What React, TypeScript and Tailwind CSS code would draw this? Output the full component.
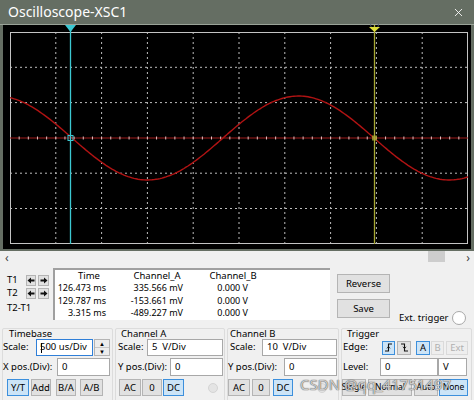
import { X } from 'lucide-react'
import clsx from 'clsx'

interface BtnProps {
  label?: React.ReactNode
  w: string
  h?: string
  active?: boolean
  disabled?: boolean
  className?: string
}

function Btn({ label, w, h = 'h-full', active, disabled, className }: BtnProps) {
  return (
    <div
      className={clsx(
        'flex items-center justify-center border shrink-0 leading-none whitespace-nowrap',
        w,
        h,
        active && 'bg-[#cce4f7] border-[#3c8fdc]',
        disabled && 'bg-[#eeeeee] border-[#dadada] text-[#b0b0b0]',
        !active && !disabled && 'bg-[#e1e1e1] border-[#b4b4b4]',
        className,
      )}
    >
      {label}
    </div>
  )
}

function Field({ value, w, focus }: { value: string; w: string; focus?: boolean }) {
  return (
    <div
      className={clsx(
        'flex items-center h-full bg-white border pl-[4px] shrink-0 whitespace-pre',
        w,
        focus ? 'border-[#2f7fd8]' : 'border-[#a8a8a8]',
      )}
    >
      {focus && <span className="w-px h-[10px] bg-black -mr-[2px]" />}
      {value}
    </div>
  )
}

function Arrow({ dir }: { dir: 'l' | 'r' }) {
  return (
    <svg width="8" height="7" viewBox="0 0 8 7">
      {dir === 'l' ? (
        <path d="M0.5 3.5 L4 0.5 V2.5 H7.5 V4.5 H4 V6.5 Z" fill="#111" />
      ) : (
        <path d="M7.5 3.5 L4 0.5 V2.5 H0.5 V4.5 H4 V6.5 Z" fill="#111" />
      )}
    </svg>
  )
}

function Scope() {
  const pts: string[] = []
  for (let x = 10; x <= 468; x += 2) {
    const y = 138 + 42 * Math.sin((2 * Math.PI * (x - 72)) / 302)
    pts.push(`${x},${y.toFixed(1)}`)
  }
  const vx = Array.from({ length: 9 }, (_, i) => 10 + 45.8 * (i + 1))
  const hy = [67.3, 102.6, 173.2, 208.5]
  const ticks = Array.from({ length: 49 }, (_, i) => 10 + 9.16 * (i + 1))

  return (
    <svg width="474" height="227" viewBox="0 24 474 227" className="block">
      <rect x="0" y="24" width="474" height="227" fill="#656e63" />
      <line x1="0" y1="24.5" x2="474" y2="24.5" stroke="#9aa398" />
      <rect x="3" y="25" width="468" height="224" fill="#000" />
      {vx.map((x) => (
        <line key={x} x1={x} y1="32" x2={x} y2="244" stroke="#bdbdbd" strokeDasharray="2 3" />
      ))}
      {hy.map((y) => (
        <line key={y} x1="10" y1={y} x2="468" y2={y} stroke="#bdbdbd" strokeDasharray="2 3" />
      ))}
      <rect x="10.5" y="32.5" width="457" height="211" fill="none" stroke="#c4c4c4" />
      <line x1="10" y1="138" x2="468" y2="138" stroke="#a01818" strokeWidth="1.2" />
      {ticks.map((x) => (
        <line key={x} x1={x} y1="136.5" x2={x} y2="139.5" stroke="#e6c4c4" strokeWidth="1" />
      ))}
      <polyline points={pts.join(' ')} fill="none" stroke="#b01313" strokeWidth="1.4" />
      <line x1="70.5" y1="25" x2="70.5" y2="244" stroke="#3cc8d2" strokeWidth="1.3" />
      <polygon points="65,25 76,25 70.5,32" fill="#3cc8d2" />
      <rect x="68" y="135.5" width="5" height="5" fill="none" stroke="#3cc8d2" />
      <line x1="374.5" y1="25" x2="374.5" y2="244" stroke="#a9a934" strokeWidth="1.3" />
      <circle cx="374.5" cy="25" r="4" fill="none" stroke="#4a5a78" strokeWidth="0.8" />
      <polygon points="369,27 380,27 374.5,32" fill="#dede3a" />
      <rect x="372" y="135.5" width="5" height="5" fill="#a9a934" opacity="0.8" />
    </svg>
  )
}

function EdgeIcon({ rising }: { rising?: boolean }) {
  return (
    <svg width="9" height="9" viewBox="0 0 9 9">
      {rising ? (
        <>
          <polyline points="1,8 4.5,8 4.5,1 8,1" fill="none" stroke="#111" strokeWidth="1.1" />
          <polyline points="3,5.3 4.5,3.8 6,5.3" fill="none" stroke="#111" strokeWidth="1" />
        </>
      ) : (
        <>
          <polyline points="1,1 4.5,1 4.5,8 8,8" fill="none" stroke="#111" strokeWidth="1.1" />
          <polyline points="3,3.8 4.5,5.3 6,3.8" fill="none" stroke="#111" strokeWidth="1" />
        </>
      )}
    </svg>
  )
}

const readings = [
  ['126.473 ms', '335.566 mV', '0.000 V'],
  ['129.787 ms', '-153.661 mV', '0.000 V'],
  ['3.315 ms', '-489.227 mV', '0.000 V'],
]

export default function App() {
  return (
    <div className="relative w-[474px] h-[400px] overflow-hidden bg-[#f0f0f0] text-[9.5px] text-black font-['Noto_Sans',sans-serif]">
      {/* title bar */}
      <div className="flex items-center justify-between h-[24px] bg-[#656e63] pl-[8px] pr-[9px]">
        <span className="text-[14px] text-white leading-none">Oscilloscope-XSC1</span>
        <X className="w-[13px] h-[13px] text-white" strokeWidth={1.6} />
      </div>

      <Scope />

      {/* scroll row */}
      <div className="flex items-center h-[13px] text-[#444] text-[12px]">
        <span className="ml-[5px] leading-none">&lsaquo;</span>
        <div className="flex-1" />
        <div className="w-[17px] h-[11px] bg-[#cdcdcd] self-start" />
        <span className="ml-[21px] mr-[4px] leading-none">&rsaquo;</span>
      </div>

      {/* measurement row */}
      <div className="flex h-[58px]">
        <div className="w-[53px] pt-[11px] pl-[7px] flex flex-col">
          <div className="flex items-center h-[11px]">
            <span className="w-[19px]">T1</span>
            <Btn w="w-[10px]" label={<Arrow dir="l" />} />
            <Btn w="w-[11px]" className="ml-[2px]" label={<Arrow dir="r" />} />
          </div>
          <div className="flex items-center h-[11px] mt-[2px]">
            <span className="w-[19px]">T2</span>
            <Btn w="w-[10px]" label={<Arrow dir="l" />} />
            <Btn w="w-[11px]" className="ml-[2px]" label={<Arrow dir="r" />} />
          </div>
          <div className="h-[12px] mt-[3px] leading-[12px]">T2-T1</div>
        </div>

        <div className="mt-[4px] h-[52px] w-[277px] bg-white border-t-2 border-l-2 border-[#a0a0a0] leading-[12.3px] whitespace-nowrap">
          <div className="flex">
            <span className="w-[68px] text-center">Time</span>
            <span className="w-[68px] text-center">Channel_A</span>
            <span className="w-[84px] text-center">Channel_B</span>
          </div>
          {readings.map((r) => (
            <div key={r[0]} className="flex text-[9px]">
              <span className="w-[51px] shrink-0 flex justify-end">{r[0]}</span>
              <span className="w-[77px] shrink-0 flex justify-end">{r[1]}</span>
              <span className="w-[65px] shrink-0 flex justify-end">{r[2]}</span>
            </div>
          ))}
        </div>

        <div className="ml-[7px] w-[53px] flex flex-col pt-[10px]">
          <Btn w="w-[53px]" h="h-[19px]" label="Reverse" />
          <Btn w="w-[53px]" h="h-[19px]" className="mt-[6px]" label="Save" />
        </div>

        <div className="flex items-center h-[14px] mt-[47px] ml-[9px] whitespace-nowrap">
          <span>Ext. trigger</span>
          <div className="ml-[3px] w-[14px] h-[14px] rounded-full bg-white border border-[#a8a8a8]" />
        </div>
      </div>

      {/* control groups */}
      <div className="flex mt-[6px] pl-[2px] whitespace-nowrap">
        {/* Timebase */}
        <div className="w-[111px] h-[80px] border border-[#dcdcdc] rounded-[2px] flex flex-col">
          <div className="h-[10px] leading-[10px] ml-[6px]">Timebase</div>
          <div className="flex items-center h-[17px]">
            <span className="w-[33px]">Scale:</span>
            <Field w="w-[57px]" value="500 us/Div" focus />
            <div className="ml-[1px] w-[16px] h-full flex flex-col border border-[#b4b4b4] bg-[#ececec] text-[6px] leading-none">
              <div className="flex-1 flex items-center justify-center border-b border-[#c8c8c8]">▲</div>
              <div className="flex-1 flex items-center justify-center">▼</div>
            </div>
          </div>
          <div className="flex items-center h-[18px] mt-[2px]">
            <span className="w-[54px]">X pos.(Div):</span>
            <Field w="w-[53px]" value="0" />
          </div>
          <div className="flex h-[17px] mt-[3px] pl-[4px]">
            <Btn w="w-[22px]" label="Y/T" active />
            <Btn w="w-[20px]" className="ml-[2px]" label="Add" />
            <Btn w="w-[20px]" className="ml-[5px]" label="B/A" />
            <Btn w="w-[23px]" className="ml-[4px]" label="A/B" />
          </div>
        </div>

        {/* Channel A */}
        <div className="ml-[2px] w-[110px] h-[80px] border border-[#dcdcdc] rounded-[2px] flex flex-col">
          <div className="h-[10px] leading-[10px] ml-[5px]">Channel A</div>
          <div className="flex items-center h-[17px]">
            <span className="w-[31px] pl-[2px]">Scale:</span>
            <Field w="w-[76px]" value="5  V/Div" />
          </div>
          <div className="flex items-center h-[18px] mt-[2px]">
            <span className="w-[54px] pl-[2px]">Y pos.(Div):</span>
            <Field w="w-[53px]" value="0" />
          </div>
          <div className="flex items-center h-[17px] mt-[3px] pl-[3px]">
            <Btn w="w-[22px]" label="AC" />
            <Btn w="w-[20px]" className="ml-[1px]" label="0" />
            <Btn w="w-[21px]" className="ml-[1px]" label="DC" active />
            <div className="ml-[24px] w-[10px] h-[10px] rounded-full bg-[#e4e4e4] border border-[#d4d4d4]" />
          </div>
        </div>

        {/* Channel B */}
        <div className="ml-[2px] w-[112px] h-[80px] border border-[#dcdcdc] rounded-[2px] flex flex-col">
          <div className="h-[10px] leading-[10px] ml-[2px]">Channel B</div>
          <div className="flex items-center h-[17px]">
            <span className="w-[34px] pl-[2px]">Scale:</span>
            <Field w="w-[75px]" value="10  V/Div" />
          </div>
          <div className="flex items-center h-[18px] mt-[2px]">
            <span className="w-[56px]">Y pos.(Div):</span>
            <Field w="w-[53px]" value="0" />
          </div>
          <div className="flex items-center h-[17px] mt-[3px]">
            <Btn w="w-[22px]" label="AC" />
            <Btn w="w-[18px]" className="ml-[2px]" label="0" />
            <Btn w="w-[20px]" className="ml-[3px]" label="DC" active />
            <div className="ml-[24px] w-[10px] h-[10px] rounded-full bg-[#e4e4e4] border border-[#d4d4d4]" />
          </div>
        </div>

        {/* Trigger */}
        <div className="ml-[2px] w-[131px] h-[80px] border border-[#dcdcdc] rounded-[2px] flex flex-col">
          <div className="h-[10px] leading-[10px] ml-[5px]">Trigger</div>
          <div className="flex items-center h-[17px]">
            <span className="w-[40px] pl-[1px]">Edge:</span>
            <Btn w="w-[13px]" h="h-[14px]" label={<EdgeIcon rising />} active />
            <Btn w="w-[14px]" h="h-[14px]" className="ml-[2px]" label={<EdgeIcon />} />
            <Btn w="w-[14px]" h="h-[14px]" className="ml-[5px]" label="A" active />
            <Btn w="w-[13px]" h="h-[14px]" className="ml-[1px]" label="B" disabled />
            <Btn w="w-[22px]" h="h-[14px]" className="ml-[2px]" label="Ext" disabled />
          </div>
          <div className="flex items-center h-[18px] mt-[2px]">
            <span className="w-[38px] pl-[1px]">Level:</span>
            <Field w="w-[58px]" value="0" />
            <Field w="w-[29px]" value="V" />
          </div>
          <div className="flex h-[17px] mt-[3px] text-[8.5px]">
            <Btn w="w-[24px]" label="Single" />
            <Btn w="w-[44px]" className="ml-[2px]" label="Normal" />
            <Btn w="w-[24px]" className="ml-[2px]" label="Auto" />
            <Btn w="w-[29px]" className="ml-[1px]" label="None" active />
          </div>
        </div>
      </div>

      {/* watermark */}
      <div className="absolute left-[300px] top-[377px] text-[15px] leading-none text-white/70 [text-shadow:0_0_1px_#555,0_0_1px_#555] pointer-events-none">
        CSDN @qq_41751497
      </div>
    </div>
  )
}
